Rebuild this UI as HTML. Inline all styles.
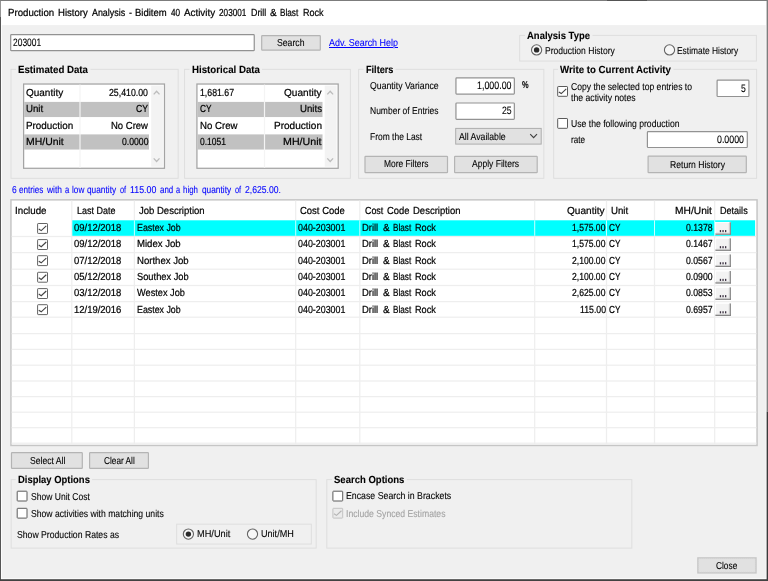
<!DOCTYPE html>
<html><head><meta charset="utf-8"><title>Production History Analysis</title>
<style>html,body{margin:0;padding:0}body{width:768px;height:581px;position:relative;overflow:hidden;background:#fff;font-family:"Liberation Sans",sans-serif;}span{position:absolute;white-space:pre;text-rendering:geometricPrecision;display:block;transform-origin:0 0;font-size:10.0px;line-height:13px;color:#000;-webkit-text-stroke:0.1px}.s{font-size:10.2px;-webkit-text-stroke:0.22px}.b{font-size:10.3px;font-weight:bold}#t{position:absolute;left:0;top:0;width:768px;height:581px;will-change:transform}</style></head>
<body>
<svg width="768" height="581" viewBox="0 0 768 581" style="position:absolute;left:0;top:0">
<rect x="0" y="0" width="768" height="581" fill="#fff"/>
<rect x="1.8" y="25.1" width="764" height="553.3" fill="#f0f0f0"/>
<rect x="0" y="0" width="768" height="0.9" fill="#6e6e6e"/>
<rect x="607" y="0" width="40" height="0.9" fill="#505050"/>
<rect x="0" y="0" width="0.85" height="17" fill="#808080"/>
<rect x="0" y="17" width="0.85" height="564" fill="#383838"/>
<rect x="766.6" y="0" width="1.4" height="411.6" fill="#7e7e7e"/>
<rect x="766.6" y="411.6" width="1.4" height="169.4" fill="#3a3a3a"/>
<rect x="0" y="579.2" width="768" height="1.8" fill="#424242"/>
<rect x="10.7" y="34.6" width="243.55" height="16.1" rx="0.8" fill="#fff" stroke="#929292" stroke-width="1.2"/>
<rect x="261.7" y="35.6" width="58.6" height="14.45" rx="0.6" fill="#e1e1e1" stroke="#b4b4b4" stroke-width="1.2"/>
<rect x="519.7" y="35.4" width="236.7" height="25.65" fill="none" stroke="#dedede" stroke-width="1"/>
<rect x="525" y="32.4" width="67.5" height="6" fill="#f0f0f0"/>
<circle cx="536.6" cy="49.9" r="5.1" fill="#f7f7f7" stroke="#646464" stroke-width="1.1"/>
<circle cx="536.6" cy="49.9" r="2.7" fill="#2a2a2a"/>
<circle cx="669.5" cy="49.9" r="5.1" fill="#f7f7f7" stroke="#646464" stroke-width="1.1"/>
<rect x="11" y="69.35" width="167.15" height="108.95" fill="none" stroke="#dedede" stroke-width="1"/>
<rect x="16" y="66.35" width="74.5" height="6" fill="#f0f0f0"/>
<rect x="23.62" y="84.03" width="140.85" height="84.25" fill="#fff" stroke="#a4a4a4" stroke-width="1.25"/>
<rect x="151.2" y="85.6" width="11.7" height="81.1" fill="#f3f3f3"/>
<rect x="24.2" y="101.9" width="124.8" height="15.15" fill="#c1c1c1"/>
<rect x="24.2" y="134.4" width="124.8" height="15.15" fill="#c1c1c1"/>
<rect x="79.4" y="84.6" width="1.2" height="83.1" fill="#f4f4f4"/>
<path d="M153.7 94.4 L156.6 91.3 L159.5 94.4" fill="none" stroke="#bcbcbc" stroke-width="1.35"/>
<path d="M153.7 158.4 L156.6 161.5 L159.5 158.4" fill="none" stroke="#bcbcbc" stroke-width="1.35"/>
<rect x="184.55" y="69.35" width="165.85" height="108.95" fill="none" stroke="#dedede" stroke-width="1"/>
<rect x="189.5" y="66.35" width="72.5" height="6" fill="#f0f0f0"/>
<rect x="196.93" y="84.03" width="141.25" height="84.25" fill="#fff" stroke="#a4a4a4" stroke-width="1.25"/>
<rect x="324.7" y="85.6" width="11.9" height="81.1" fill="#f3f3f3"/>
<rect x="197.5" y="101.9" width="125" height="15.15" fill="#c1c1c1"/>
<rect x="197.5" y="134.4" width="125" height="15.15" fill="#c1c1c1"/>
<rect x="263.9" y="84.6" width="1.2" height="83.1" fill="#f4f4f4"/>
<path d="M327.3 94.4 L330.2 91.3 L333.1 94.4" fill="none" stroke="#bcbcbc" stroke-width="1.35"/>
<path d="M327.3 158.4 L330.2 161.5 L333.1 158.4" fill="none" stroke="#bcbcbc" stroke-width="1.35"/>
<rect x="358.6" y="69.35" width="185.2" height="108.95" fill="none" stroke="#dedede" stroke-width="1"/>
<rect x="363.6" y="66.35" width="31.9" height="6" fill="#f0f0f0"/>
<rect x="455.95" y="77.85" width="58.4" height="16.3" rx="0.8" fill="#fff" stroke="#929292" stroke-width="1.2"/>
<rect x="455.95" y="103" width="58.4" height="16.4" rx="0.8" fill="#fff" stroke="#929292" stroke-width="1.2"/>
<rect x="455.7" y="128.4" width="85.5" height="15.7" fill="#e1e1e1" stroke="#adadad" stroke-width="1"/>
<path d="M530.2 134.2 L533.6 137.6 L537 134.2" fill="none" stroke="#404040" stroke-width="1.15"/>
<rect x="365" y="156.3" width="82.5" height="16.3" rx="0.6" fill="#e1e1e1" stroke="#b4b4b4" stroke-width="1.2"/>
<rect x="454.6" y="156.3" width="82.6" height="16.3" rx="0.6" fill="#e1e1e1" stroke="#b4b4b4" stroke-width="1.2"/>
<rect x="553.7" y="69.35" width="202.9" height="108.95" fill="none" stroke="#dedede" stroke-width="1"/>
<rect x="558" y="66.35" width="115.5" height="6" fill="#f0f0f0"/>
<rect x="557.7" y="86.5" width="9.8" height="9.8" rx="0.6" fill="#fff" stroke="#5a5a5a" stroke-width="1"/>
<path d="M558.82 91.94 L561.3 93.56 L566.27 88.92" fill="none" stroke="#444" stroke-width="1.15"/>
<rect x="717.1" y="80.2" width="31.8" height="16.3" rx="0.8" fill="#fff" stroke="#929292" stroke-width="1.2"/>
<rect x="557.7" y="118.5" width="9.8" height="9.8" rx="0.6" fill="#fff" stroke="#5a5a5a" stroke-width="1"/>
<rect x="647.4" y="131.6" width="99.9" height="15.9" rx="0.8" fill="#fff" stroke="#929292" stroke-width="1.2"/>
<rect x="648.1" y="156.1" width="98.2" height="16.6" rx="0.6" fill="#e1e1e1" stroke="#b4b4b4" stroke-width="1.2"/>
<rect x="10.95" y="199.85" width="746.1" height="245.6" fill="#fff" stroke="#c6c6c6" stroke-width="1.5"/>
<rect x="11.7" y="235.88" width="744.6" height="1.24" fill="#eeeeee"/>
<rect x="11.7" y="251.98" width="744.6" height="1.24" fill="#eeeeee"/>
<rect x="11.7" y="268.58" width="744.6" height="1.24" fill="#eeeeee"/>
<rect x="11.7" y="284.88" width="744.6" height="1.24" fill="#eeeeee"/>
<rect x="11.7" y="300.98" width="744.6" height="1.24" fill="#eeeeee"/>
<rect x="11.7" y="316.58" width="744.6" height="1.24" fill="#eeeeee"/>
<rect x="11.7" y="332.98" width="744.6" height="1.24" fill="#eeeeee"/>
<rect x="11.7" y="348.78" width="744.6" height="1.24" fill="#eeeeee"/>
<rect x="11.7" y="364.58" width="744.6" height="1.24" fill="#eeeeee"/>
<rect x="11.7" y="380.38" width="744.6" height="1.24" fill="#eeeeee"/>
<rect x="11.7" y="395.98" width="744.6" height="1.24" fill="#eeeeee"/>
<rect x="11.7" y="411.58" width="744.6" height="1.24" fill="#eeeeee"/>
<rect x="11.7" y="427.08" width="744.6" height="1.24" fill="#eeeeee"/>
<rect x="11.7" y="442.58" width="744.6" height="1.24" fill="#eeeeee"/>
<rect x="71.18" y="200.6" width="1.24" height="244.1" fill="#eeeeee"/>
<rect x="133.78" y="200.6" width="1.24" height="244.1" fill="#eeeeee"/>
<rect x="295.08" y="200.6" width="1.24" height="244.1" fill="#eeeeee"/>
<rect x="359.18" y="200.6" width="1.24" height="244.1" fill="#eeeeee"/>
<rect x="534.08" y="200.6" width="1.24" height="244.1" fill="#eeeeee"/>
<rect x="605.88" y="200.6" width="1.24" height="244.1" fill="#eeeeee"/>
<rect x="653.88" y="200.6" width="1.24" height="244.1" fill="#eeeeee"/>
<rect x="714.08" y="200.6" width="1.24" height="244.1" fill="#eeeeee"/>
<rect x="72.3" y="220.3" width="682.8" height="15.5" fill="#00ffff"/>
<rect x="133.9" y="220.3" width="1" height="15.5" fill="#c8ffff"/>
<rect x="295.2" y="220.3" width="1" height="15.5" fill="#c8ffff"/>
<rect x="359.3" y="220.3" width="1" height="15.5" fill="#c8ffff"/>
<rect x="534.2" y="220.3" width="1" height="15.5" fill="#c8ffff"/>
<rect x="606" y="220.3" width="1" height="15.5" fill="#c8ffff"/>
<rect x="654" y="220.3" width="1" height="15.5" fill="#c8ffff"/>
<rect x="714.2" y="220.3" width="1" height="15.5" fill="#c8ffff"/>
<rect x="37.6" y="223.5" width="9.9" height="9.9" rx="0.6" fill="#fff" stroke="#646464" stroke-width="1"/>
<path d="M38.73 229 L41.24 230.63 L46.26 225.94" fill="none" stroke="#444" stroke-width="1.15"/>
<rect x="715.1" y="221.95" width="15.8" height="12.85" fill="#f3f3f3"/>
<rect x="715.1" y="221.95" width="15.8" height="0.8" fill="#fff"/>
<rect x="715.1" y="221.95" width="0.8" height="12.85" fill="#fff"/>
<rect x="729.6" y="222.25" width="1.3" height="12.55" fill="#858585"/>
<rect x="715.4" y="233.4" width="15.5" height="1.4" fill="#858585"/>
<rect x="728.8" y="222.95" width="0.8" height="10.45" fill="#cfcfcf"/>
<rect x="716.1" y="232.7" width="13.5" height="0.7" fill="#cfcfcf"/>
<rect x="719.8" y="230.05" width="1.3" height="2.1" fill="#3a3040"/>
<rect x="722.4" y="230.05" width="1.3" height="2.1" fill="#3a3040"/>
<rect x="725" y="230.05" width="1.3" height="2.1" fill="#3a3040"/>
<rect x="37.6" y="239.6" width="9.9" height="9.9" rx="0.6" fill="#fff" stroke="#646464" stroke-width="1"/>
<path d="M38.73 245.09 L41.24 246.73 L46.26 242.04" fill="none" stroke="#444" stroke-width="1.15"/>
<rect x="715.1" y="238.05" width="15.8" height="12.85" fill="#f3f3f3"/>
<rect x="715.1" y="238.05" width="15.8" height="0.8" fill="#fff"/>
<rect x="715.1" y="238.05" width="0.8" height="12.85" fill="#fff"/>
<rect x="729.6" y="238.35" width="1.3" height="12.55" fill="#858585"/>
<rect x="715.4" y="249.5" width="15.5" height="1.4" fill="#858585"/>
<rect x="728.8" y="239.05" width="0.8" height="10.45" fill="#cfcfcf"/>
<rect x="716.1" y="248.8" width="13.5" height="0.7" fill="#cfcfcf"/>
<rect x="719.8" y="246.15" width="1.3" height="2.1" fill="#3a3040"/>
<rect x="722.4" y="246.15" width="1.3" height="2.1" fill="#3a3040"/>
<rect x="725" y="246.15" width="1.3" height="2.1" fill="#3a3040"/>
<rect x="37.6" y="255.7" width="9.9" height="9.9" rx="0.6" fill="#fff" stroke="#646464" stroke-width="1"/>
<path d="M38.73 261.19 L41.24 262.83 L46.26 258.14" fill="none" stroke="#444" stroke-width="1.15"/>
<rect x="715.1" y="254.15" width="15.8" height="12.85" fill="#f3f3f3"/>
<rect x="715.1" y="254.15" width="15.8" height="0.8" fill="#fff"/>
<rect x="715.1" y="254.15" width="0.8" height="12.85" fill="#fff"/>
<rect x="729.6" y="254.45" width="1.3" height="12.55" fill="#858585"/>
<rect x="715.4" y="265.6" width="15.5" height="1.4" fill="#858585"/>
<rect x="728.8" y="255.15" width="0.8" height="10.45" fill="#cfcfcf"/>
<rect x="716.1" y="264.9" width="13.5" height="0.7" fill="#cfcfcf"/>
<rect x="719.8" y="262.25" width="1.3" height="2.1" fill="#3a3040"/>
<rect x="722.4" y="262.25" width="1.3" height="2.1" fill="#3a3040"/>
<rect x="725" y="262.25" width="1.3" height="2.1" fill="#3a3040"/>
<rect x="37.6" y="272.3" width="9.9" height="9.9" rx="0.6" fill="#fff" stroke="#646464" stroke-width="1"/>
<path d="M38.73 277.8 L41.24 279.43 L46.26 274.74" fill="none" stroke="#444" stroke-width="1.15"/>
<rect x="715.1" y="270.75" width="15.8" height="12.85" fill="#f3f3f3"/>
<rect x="715.1" y="270.75" width="15.8" height="0.8" fill="#fff"/>
<rect x="715.1" y="270.75" width="0.8" height="12.85" fill="#fff"/>
<rect x="729.6" y="271.05" width="1.3" height="12.55" fill="#858585"/>
<rect x="715.4" y="282.2" width="15.5" height="1.4" fill="#858585"/>
<rect x="728.8" y="271.75" width="0.8" height="10.45" fill="#cfcfcf"/>
<rect x="716.1" y="281.5" width="13.5" height="0.7" fill="#cfcfcf"/>
<rect x="719.8" y="278.85" width="1.3" height="2.1" fill="#3a3040"/>
<rect x="722.4" y="278.85" width="1.3" height="2.1" fill="#3a3040"/>
<rect x="725" y="278.85" width="1.3" height="2.1" fill="#3a3040"/>
<rect x="37.6" y="288.6" width="9.9" height="9.9" rx="0.6" fill="#fff" stroke="#646464" stroke-width="1"/>
<path d="M38.73 294.1 L41.24 295.73 L46.26 291.04" fill="none" stroke="#444" stroke-width="1.15"/>
<rect x="715.1" y="287.05" width="15.8" height="12.85" fill="#f3f3f3"/>
<rect x="715.1" y="287.05" width="15.8" height="0.8" fill="#fff"/>
<rect x="715.1" y="287.05" width="0.8" height="12.85" fill="#fff"/>
<rect x="729.6" y="287.35" width="1.3" height="12.55" fill="#858585"/>
<rect x="715.4" y="298.5" width="15.5" height="1.4" fill="#858585"/>
<rect x="728.8" y="288.05" width="0.8" height="10.45" fill="#cfcfcf"/>
<rect x="716.1" y="297.8" width="13.5" height="0.7" fill="#cfcfcf"/>
<rect x="719.8" y="295.15" width="1.3" height="2.1" fill="#3a3040"/>
<rect x="722.4" y="295.15" width="1.3" height="2.1" fill="#3a3040"/>
<rect x="725" y="295.15" width="1.3" height="2.1" fill="#3a3040"/>
<rect x="37.6" y="304.7" width="9.9" height="9.9" rx="0.6" fill="#fff" stroke="#646464" stroke-width="1"/>
<path d="M38.73 310.2 L41.24 311.83 L46.26 307.14" fill="none" stroke="#444" stroke-width="1.15"/>
<rect x="715.1" y="303.15" width="15.8" height="12.85" fill="#f3f3f3"/>
<rect x="715.1" y="303.15" width="15.8" height="0.8" fill="#fff"/>
<rect x="715.1" y="303.15" width="0.8" height="12.85" fill="#fff"/>
<rect x="729.6" y="303.45" width="1.3" height="12.55" fill="#858585"/>
<rect x="715.4" y="314.6" width="15.5" height="1.4" fill="#858585"/>
<rect x="728.8" y="304.15" width="0.8" height="10.45" fill="#cfcfcf"/>
<rect x="716.1" y="313.9" width="13.5" height="0.7" fill="#cfcfcf"/>
<rect x="719.8" y="311.25" width="1.3" height="2.1" fill="#3a3040"/>
<rect x="722.4" y="311.25" width="1.3" height="2.1" fill="#3a3040"/>
<rect x="725" y="311.25" width="1.3" height="2.1" fill="#3a3040"/>
<rect x="11.5" y="452.7" width="70.8" height="15.7" rx="0.6" fill="#e1e1e1" stroke="#b4b4b4" stroke-width="1.2"/>
<rect x="89.6" y="452.7" width="58.8" height="15.7" rx="0.6" fill="#e1e1e1" stroke="#b4b4b4" stroke-width="1.2"/>
<rect x="11.2" y="479.6" width="304.95" height="68.5" fill="none" stroke="#dedede" stroke-width="1"/>
<rect x="15.7" y="476.6" width="76.4" height="6" fill="#f0f0f0"/>
<rect x="17.2" y="491.2" width="9.8" height="9.8" rx="0.6" fill="#fff" stroke="#5a5a5a" stroke-width="1"/>
<rect x="17.2" y="508.3" width="9.8" height="9.8" rx="0.6" fill="#fff" stroke="#5a5a5a" stroke-width="1"/>
<rect x="176.7" y="524.2" width="134.6" height="19.85" fill="none" stroke="#dedede" stroke-width="1"/>
<circle cx="188.4" cy="534.1" r="5.1" fill="#f7f7f7" stroke="#646464" stroke-width="1.1"/>
<circle cx="188.4" cy="534.1" r="2.7" fill="#2a2a2a"/>
<circle cx="252.5" cy="534.1" r="5.1" fill="#f7f7f7" stroke="#646464" stroke-width="1.1"/>
<rect x="326.8" y="479.6" width="305" height="68.5" fill="none" stroke="#dedede" stroke-width="1"/>
<rect x="332" y="476.6" width="74.9" height="6" fill="#f0f0f0"/>
<rect x="332.9" y="491.2" width="9.8" height="9.8" rx="0.6" fill="#fff" stroke="#5a5a5a" stroke-width="1"/>
<rect x="332.9" y="508.3" width="9.8" height="9.8" rx="0.6" fill="#ebebeb" stroke="#c2c2c2" stroke-width="1"/>
<path d="M334.02 513.74 L336.5 515.36 L341.47 510.72" fill="none" stroke="#b4b4b4" stroke-width="1.15"/>
<rect x="697.9" y="557.9" width="58.1" height="15" fill="#e1e1e1" stroke="#c6c6c6" stroke-width="1.4"/>
<path d="M698.9 558.9 H755 V571.9 H698.9 Z" fill="none" stroke="#dcdcdc" stroke-width="0.7" stroke-dasharray="1 1"/>
</svg>
<div id="t">
<span class="s" style="left:7.5px;top:7px;transform:scaleX(0.9483);">Production</span>
<span class="s" style="left:58.3px;top:7px;transform:scaleX(0.9368);">History</span>
<span class="s" style="left:91.7px;top:7px;transform:scaleX(0.8725);">Analysis</span>
<span class="s" style="left:128.7px;top:7px;transform:scaleX(0.8807);">-</span>
<span class="s" style="left:135.3px;top:7px;transform:scaleX(0.9328);">Biditem</span>
<span class="s" style="left:171.43px;top:7px;transform:scaleX(0.8058);">40</span>
<span class="s" style="left:184.2px;top:7px;transform:scaleX(0.9639);">Activity</span>
<span class="s" style="left:218.5px;top:7px;transform:scaleX(0.8058);">203001</span>
<span class="s" style="left:250.7px;top:7px;transform:scaleX(0.8720);">Drill</span>
<span class="s" style="left:269.8px;top:7px;transform:scaleX(0.9849);">&amp;</span>
<span class="s" style="left:280.47px;top:7px;transform:scaleX(0.8058);">Blast</span>
<span class="s" style="left:303px;top:7px;transform:scaleX(0.8872);">Rock</span>
<span style="left:13.1px;top:37px;font-size:10.7px;transform:scaleX(0.7905);">203001</span>
<span style="left:277px;top:37px;transform:scaleX(0.8679);">Search</span>
<span style="left:329px;top:37px;color:#0000ff;transform:scaleX(0.8952);text-decoration:underline;">Adv. Search Help</span>
<span class="b" style="left:527px;top:30px;transform:scaleX(0.9199);">Analysis Type</span>
<span style="left:545px;top:45px;transform:scaleX(0.8543);">Production History</span>
<span style="left:677.3px;top:45px;transform:scaleX(0.8393);">Estimate History</span>
<span class="b" style="left:18px;top:64px;transform:scaleX(0.9408);">Estimated Data</span>
<span class="s" style="left:26.3px;top:87px;transform:scaleX(0.9802);">Quantity</span>
<span class="s" style="left:109px;top:87px;transform:scaleX(0.8604);">25,410.00</span>
<span class="s" style="left:26.3px;top:103px;transform:scaleX(0.9490);">Unit</span>
<span class="s" style="left:136px;top:103px;transform:scaleX(0.8477);">CY</span>
<span class="s" style="left:26.3px;top:120px;transform:scaleX(0.9688);">Production</span>
<span class="s" style="left:111px;top:120px;transform:scaleX(0.9334);">No Crew</span>
<span class="s" style="left:26.3px;top:136px;transform:scaleX(1.0245);">MH/Unit</span>
<span class="s" style="left:121.5px;top:136px;transform:scaleX(0.8501);">0.0000</span>
<span class="b" style="left:191.5px;top:64px;transform:scaleX(0.9430);">Historical Data</span>
<span class="s" style="left:199.5px;top:87px;transform:scaleX(0.8574);">1,681.67</span>
<span class="s" style="left:284px;top:87px;transform:scaleX(0.9881);">Quantity</span>
<span class="s" style="left:199.5px;top:103px;transform:scaleX(0.8124);">CY</span>
<span class="s" style="left:299.5px;top:103px;transform:scaleX(0.9475);">Units</span>
<span class="s" style="left:199.5px;top:120px;transform:scaleX(0.9460);">No Crew</span>
<span class="s" style="left:273.5px;top:120px;transform:scaleX(0.9852);">Production</span>
<span class="s" style="left:199.5px;top:136px;transform:scaleX(0.8341);">0.1051</span>
<span class="s" style="left:283px;top:136px;transform:scaleX(1.0463);">MH/Unit</span>
<span class="b" style="left:365.6px;top:64px;transform:scaleX(0.8866);">Filters</span>
<span style="left:370.3px;top:80px;transform:scaleX(0.8724);">Quantity Variance</span>
<span style="left:477px;top:80px;font-size:10.7px;transform:scaleX(0.8291);">1,000.00</span>
<span style="left:522px;top:79px;transform:scaleX(0.7411);font-weight:bold;">%</span>
<span style="left:370.3px;top:105px;transform:scaleX(0.8499);">Number of Entries</span>
<span style="left:501.8px;top:105px;font-size:10.7px;transform:scaleX(0.8158);">25</span>
<span style="left:370.3px;top:131px;transform:scaleX(0.8460);">From the Last</span>
<span style="left:458.6px;top:131px;transform:scaleX(0.8688);">All Available</span>
<span style="left:384px;top:158px;transform:scaleX(0.8429);">More Filters</span>
<span style="left:472px;top:158px;transform:scaleX(0.8543);">Apply Filters</span>
<span class="b" style="left:560px;top:64px;transform:scaleX(0.9418);">Write to Current Activity</span>
<span style="left:571px;top:81px;transform:scaleX(0.8603);">Copy the selected top entries to</span>
<span style="left:571px;top:92px;transform:scaleX(0.8673);">the activity notes</span>
<span style="left:741px;top:83px;font-size:10.9px;transform:scaleX(0.7918);">5</span>
<span style="left:571px;top:118px;transform:scaleX(0.8636);">Use the following production</span>
<span style="left:571px;top:134px;transform:scaleX(0.8123);">rate</span>
<span style="left:717px;top:134px;font-size:10.7px;transform:scaleX(0.8256);">0.0000</span>
<span style="left:670px;top:159px;transform:scaleX(0.8606);">Return History</span>
<span style="left:11.5px;top:184px;color:#0000ff;transform:scaleX(0.8449);">6</span>
<span style="left:19.4px;top:184px;color:#0000ff;transform:scaleX(0.8112);">entries</span>
<span style="left:47.1px;top:184px;color:#0000ff;transform:scaleX(0.8428);">with</span>
<span style="left:65px;top:184px;color:#0000ff;transform:scaleX(0.7640);">a</span>
<span style="left:71.9px;top:184px;color:#0000ff;transform:scaleX(0.8225);">low</span>
<span style="left:87.4px;top:184px;color:#0000ff;transform:scaleX(0.8307);">quantity</span>
<span style="left:119.86px;top:184px;color:#0000ff;transform:scaleX(0.7411);">of</span>
<span style="left:130px;top:184px;color:#0000ff;transform:scaleX(0.8813);">115.00</span>
<span style="left:159.8px;top:184px;color:#0000ff;transform:scaleX(0.7910);">and</span>
<span style="left:176.34px;top:184px;color:#0000ff;transform:scaleX(0.7411);">a</span>
<span style="left:183.4px;top:184px;color:#0000ff;transform:scaleX(0.7881);">high</span>
<span style="left:202px;top:184px;color:#0000ff;transform:scaleX(0.8307);">quantity</span>
<span style="left:234.76px;top:184px;color:#0000ff;transform:scaleX(0.7411);">of</span>
<span style="left:244.7px;top:184px;color:#0000ff;transform:scaleX(0.8605);">2,625.00.</span>
<span class="s" style="left:14.8px;top:205px;transform:scaleX(0.9586);">Include</span>
<span class="s" style="left:76.6px;top:205px;transform:scaleX(0.8805);">Last Date</span>
<span class="s" style="left:139px;top:205px;transform:scaleX(0.9342);">Job Description</span>
<span class="s" style="left:300.4px;top:205px;transform:scaleX(0.9306);">Cost Code</span>
<span class="s" style="left:364.7px;top:205px;transform:scaleX(0.8734);">Cost</span>
<span class="s" style="left:386.8px;top:205px;transform:scaleX(0.9237);">Code</span>
<span class="s" style="left:412.7px;top:205px;transform:scaleX(0.9319);">Description</span>
<span class="s" style="left:566.5px;top:205px;transform:scaleX(0.9881);">Quantity</span>
<span class="s" style="left:611.2px;top:205px;transform:scaleX(0.9490);">Unit</span>
<span class="s" style="left:674.8px;top:205px;transform:scaleX(1.0042);">MH/Unit</span>
<span class="s" style="left:719.75px;top:205px;transform:scaleX(0.8879);">Details</span>
<span class="s" style="left:74px;top:222px;transform:scaleX(0.9294);">09/12/2018</span>
<span class="s" style="left:137px;top:222px;transform:scaleX(0.8670);">Eastex Job</span>
<span class="s" style="left:297.8px;top:222px;transform:scaleX(0.8715);">040-203001</span>
<span class="s" style="left:362.3px;top:222px;transform:scaleX(0.9232);">Drill</span>
<span class="s" style="left:382.67px;top:222px;transform:scaleX(0.9791);">&amp;</span>
<span class="s" style="left:392.93px;top:222px;transform:scaleX(0.8011);">Blast</span>
<span class="s" style="left:415.2px;top:222px;transform:scaleX(0.9001);">Rock</span>
<span class="s" style="left:572.1px;top:222px;transform:scaleX(0.8422);">1,575.00</span>
<span class="s" style="left:608.6px;top:222px;transform:scaleX(0.8053);">CY</span>
<span class="s" style="left:686.2px;top:222px;transform:scaleX(0.8533);">0.1378</span>
<span class="s" style="left:74px;top:238px;transform:scaleX(0.9294);">09/12/2018</span>
<span class="s" style="left:137px;top:238px;transform:scaleX(0.9410);">Midex Job</span>
<span class="s" style="left:297.8px;top:238px;transform:scaleX(0.8715);">040-203001</span>
<span class="s" style="left:362.3px;top:238px;transform:scaleX(0.9232);">Drill</span>
<span class="s" style="left:382.67px;top:238px;transform:scaleX(0.9791);">&amp;</span>
<span class="s" style="left:392.93px;top:238px;transform:scaleX(0.8011);">Blast</span>
<span class="s" style="left:415.2px;top:238px;transform:scaleX(0.9001);">Rock</span>
<span class="s" style="left:572.1px;top:238px;transform:scaleX(0.8422);">1,575.00</span>
<span class="s" style="left:608.6px;top:238px;transform:scaleX(0.8053);">CY</span>
<span class="s" style="left:686.2px;top:238px;transform:scaleX(0.8533);">0.1467</span>
<span class="s" style="left:74px;top:255px;transform:scaleX(0.9294);">07/12/2018</span>
<span class="s" style="left:137px;top:255px;transform:scaleX(0.9411);">Northex Job</span>
<span class="s" style="left:297.8px;top:255px;transform:scaleX(0.8715);">040-203001</span>
<span class="s" style="left:362.3px;top:255px;transform:scaleX(0.9232);">Drill</span>
<span class="s" style="left:382.67px;top:255px;transform:scaleX(0.9791);">&amp;</span>
<span class="s" style="left:392.93px;top:255px;transform:scaleX(0.8011);">Blast</span>
<span class="s" style="left:415.2px;top:255px;transform:scaleX(0.9001);">Rock</span>
<span class="s" style="left:572.1px;top:255px;transform:scaleX(0.8422);">2,100.00</span>
<span class="s" style="left:608.6px;top:255px;transform:scaleX(0.8053);">CY</span>
<span class="s" style="left:686.2px;top:255px;transform:scaleX(0.8533);">0.0567</span>
<span class="s" style="left:74px;top:271px;transform:scaleX(0.9294);">05/12/2018</span>
<span class="s" style="left:137px;top:271px;transform:scaleX(0.9128);">Southex Job</span>
<span class="s" style="left:297.8px;top:271px;transform:scaleX(0.8715);">040-203001</span>
<span class="s" style="left:362.3px;top:271px;transform:scaleX(0.9232);">Drill</span>
<span class="s" style="left:382.67px;top:271px;transform:scaleX(0.9791);">&amp;</span>
<span class="s" style="left:392.93px;top:271px;transform:scaleX(0.8011);">Blast</span>
<span class="s" style="left:415.2px;top:271px;transform:scaleX(0.9001);">Rock</span>
<span class="s" style="left:572.1px;top:271px;transform:scaleX(0.8422);">2,100.00</span>
<span class="s" style="left:608.6px;top:271px;transform:scaleX(0.8053);">CY</span>
<span class="s" style="left:686.2px;top:271px;transform:scaleX(0.8533);">0.0900</span>
<span class="s" style="left:74px;top:287px;transform:scaleX(0.9294);">03/12/2018</span>
<span class="s" style="left:137px;top:287px;transform:scaleX(0.9030);">Westex Job</span>
<span class="s" style="left:297.8px;top:287px;transform:scaleX(0.8715);">040-203001</span>
<span class="s" style="left:362.3px;top:287px;transform:scaleX(0.9232);">Drill</span>
<span class="s" style="left:382.67px;top:287px;transform:scaleX(0.9791);">&amp;</span>
<span class="s" style="left:392.93px;top:287px;transform:scaleX(0.8011);">Blast</span>
<span class="s" style="left:415.2px;top:287px;transform:scaleX(0.9001);">Rock</span>
<span class="s" style="left:572.1px;top:287px;transform:scaleX(0.8422);">2,625.00</span>
<span class="s" style="left:608.6px;top:287px;transform:scaleX(0.8053);">CY</span>
<span class="s" style="left:686.2px;top:287px;transform:scaleX(0.8533);">0.0853</span>
<span class="s" style="left:74px;top:304px;transform:scaleX(0.9294);">12/19/2016</span>
<span class="s" style="left:137px;top:304px;transform:scaleX(0.8670);">Eastex Job</span>
<span class="s" style="left:297.8px;top:304px;transform:scaleX(0.8715);">040-203001</span>
<span class="s" style="left:362.3px;top:304px;transform:scaleX(0.9232);">Drill</span>
<span class="s" style="left:382.67px;top:304px;transform:scaleX(0.9791);">&amp;</span>
<span class="s" style="left:392.93px;top:304px;transform:scaleX(0.8011);">Blast</span>
<span class="s" style="left:415.2px;top:304px;transform:scaleX(0.9001);">Rock</span>
<span class="s" style="left:579.5px;top:304px;transform:scaleX(0.8551);">115.00</span>
<span class="s" style="left:608.6px;top:304px;transform:scaleX(0.8053);">CY</span>
<span class="s" style="left:686.2px;top:304px;transform:scaleX(0.8533);">0.6957</span>
<span style="left:29.7px;top:455px;transform:scaleX(0.8605);">Select All</span>
<span style="left:103.6px;top:455px;transform:scaleX(0.8268);">Clear All</span>
<span class="b" style="left:17.7px;top:474px;transform:scaleX(0.9172);">Display Options</span>
<span style="left:30.7px;top:491px;transform:scaleX(0.8546);">Show Unit Cost</span>
<span style="left:30.7px;top:508px;transform:scaleX(0.8625);">Show activities with matching units</span>
<span style="left:16.7px;top:529px;transform:scaleX(0.8660);">Show Production Rates as</span>
<span style="left:196.5px;top:528px;transform:scaleX(0.9218);">MH/Unit</span>
<span style="left:260.5px;top:528px;transform:scaleX(0.9080);">Unit/MH</span>
<span class="b" style="left:334px;top:474px;transform:scaleX(0.9250);">Search Options</span>
<span style="left:345.5px;top:490px;transform:scaleX(0.8762);">Encase Search in Brackets</span>
<span style="left:345.5px;top:508px;color:#a2a2a2;transform:scaleX(0.8647);">Include Synced Estimates</span>
<span style="left:716px;top:560px;transform:scaleX(0.8327);">Close</span>
</div>
</body></html>
